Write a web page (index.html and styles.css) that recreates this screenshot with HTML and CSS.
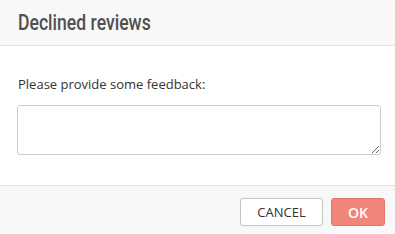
FILE: index.html
```html
<!DOCTYPE html>
<html lang="en">
<head>
  <meta charset="utf-8">
  <title>Declined reviews</title>
  <link rel="stylesheet" href="styles.css">
</head>
<body>
  <div class="modal">
    <header class="modal-header">
      <h2>Declined reviews</h2>
    </header>
    <section class="modal-body">
      <label for="feedback">Please provide some feedback:</label>
      <textarea id="feedback"></textarea>
    </section>
    <footer class="modal-footer">
      <button class="btn btn-cancel">CANCEL</button>
      <button class="btn btn-ok">OK</button>
    </footer>
  </div>
</body>
</html>
```

FILE: styles.css
```css
* {
  margin: 0;
  padding: 0;
  box-sizing: border-box;
}

body {
  background: #fff;
  font-family: "Open Sans", sans-serif;
  color: #333;
}

.modal {
  width: 395px;
  height: 234px;
  display: flex;
  flex-direction: column;
}

.modal-header {
  height: 46px;
  display: flex;
  align-items: center;
  padding: 1px 18px 0;
  background: #f8f8f8;
  border-bottom: 1px solid #e3e3e3;
}

/* the original face is a condensed one, so squeeze Roboto a little */
.modal-header h2 {
  font-family: Roboto, sans-serif;
  font-weight: 500;
  font-size: 22px;
  line-height: 26px;
  color: #505050;
  transform: scaleX(0.8);
  transform-origin: left center;
  white-space: nowrap;
}

.modal-body {
  flex: 1;
  padding: 29px 14px 0 17px;
  display: flex;
  flex-direction: column;
}

.modal-body label {
  font-size: 13px;
  line-height: 18px;
  padding-left: 1px;
  margin-bottom: 12px;
}

.modal-body textarea {
  height: 50px;
  border: 1px solid #ccc;
  border-radius: 3px;
  font: inherit;
  outline: none;
}

.modal-footer {
  height: 49px;
  display: flex;
  justify-content: flex-end;
  gap: 8px;
  padding: 12px 10px 0 0;
  background: #f8f8f8;
  border-top: 1px solid #e3e3e3;
}

.btn {
  height: 28px;
  border-radius: 3px;
  font-family: "Open Sans", sans-serif;
  font-size: 13px;
}

.btn-cancel {
  width: 83px;
  background: #fff;
  border: 1px solid #c2c2c2;
  color: #333;
}

.btn-ok {
  width: 54px;
  background: #f28579;
  border: 1px solid #e0766a;
  color: #fff;
  font-weight: 600;
  font-size: 14px;
}
```
